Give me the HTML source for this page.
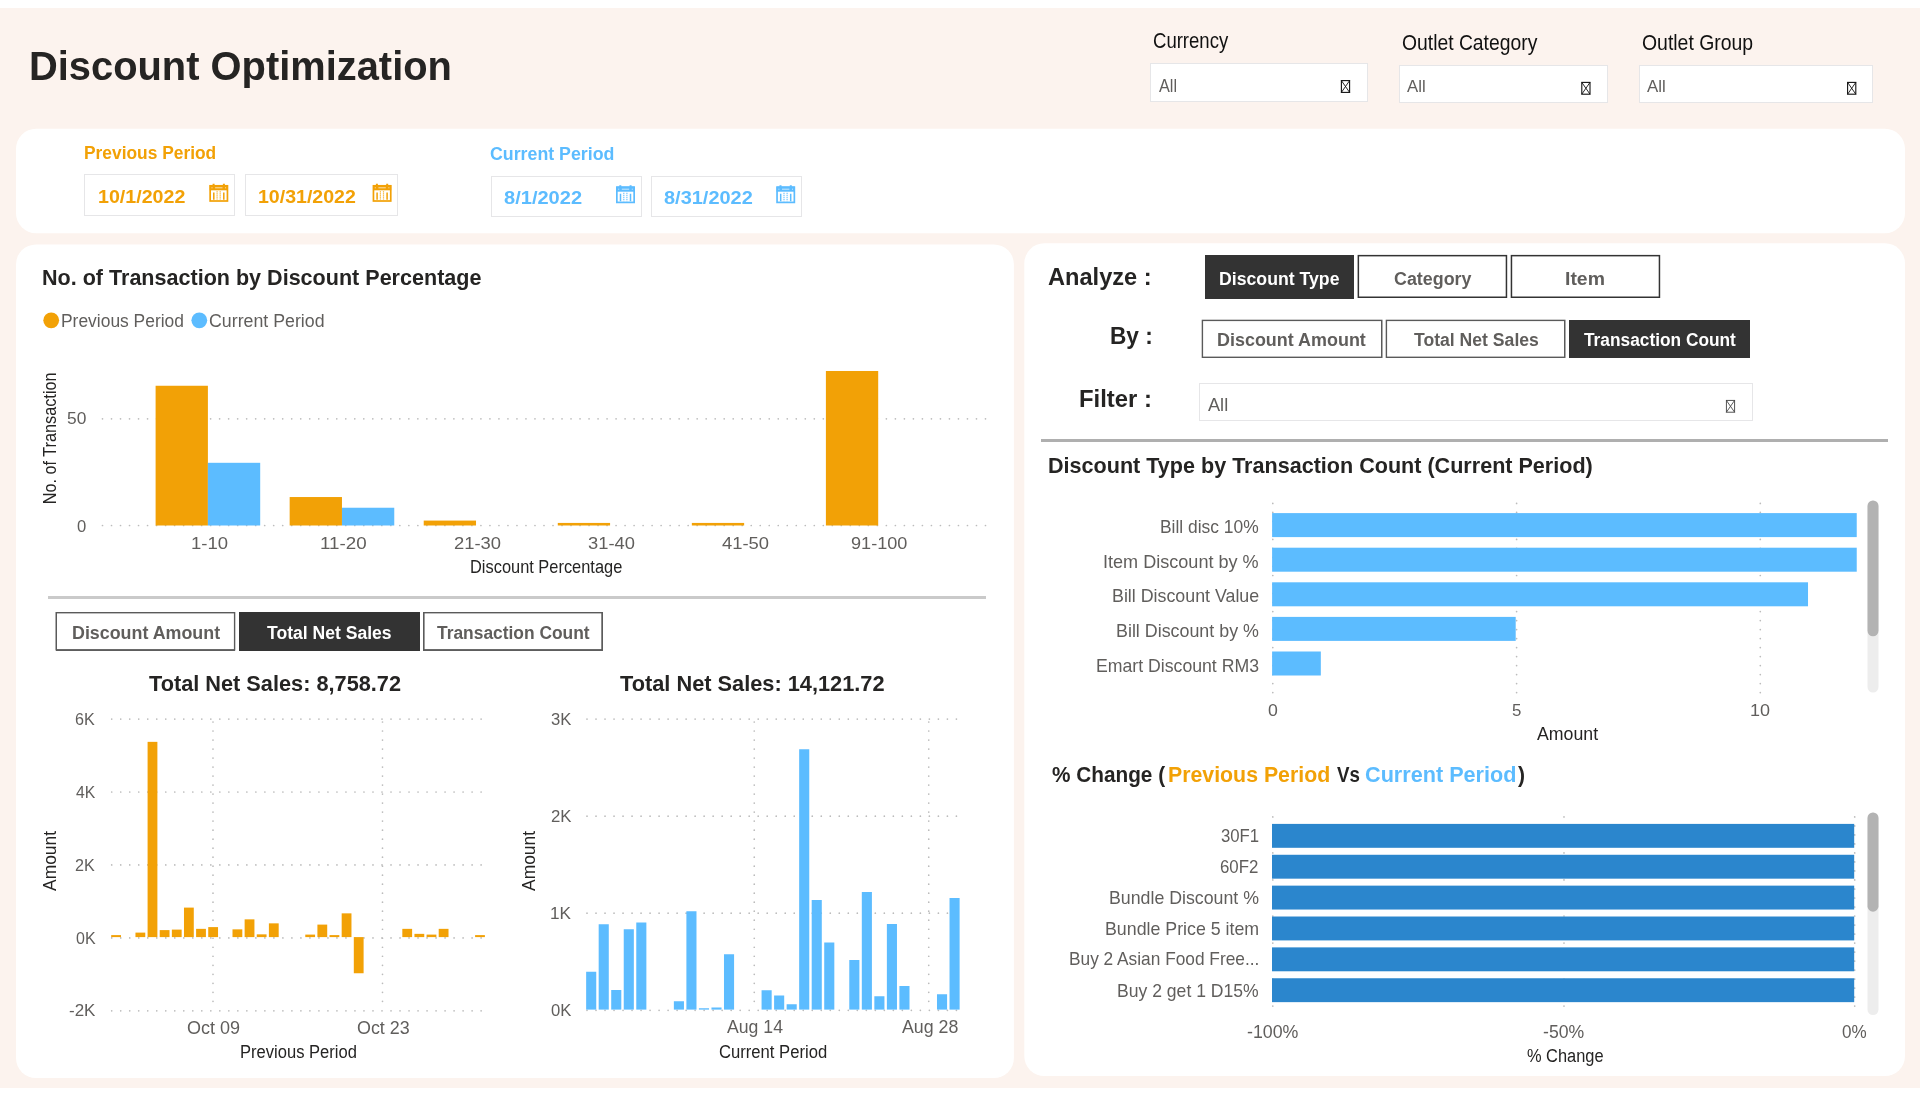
<!DOCTYPE html>
<html lang="en"><head><meta charset="utf-8"><title>Discount Optimization</title>
<style>
html,body{margin:0;padding:0}
body{width:1920px;height:1095px;position:relative;overflow:hidden;background:#fff;font-family:"Liberation Sans",sans-serif}
.bg{position:absolute;left:0;top:8px;width:1920px;height:1080px;background:#fcf3ee}
.panel{position:absolute;background:#fff;border-radius:20px}
.box{position:absolute;background:#fff;border:1px solid #e6e6e8;box-sizing:border-box}
.btn{position:absolute;box-sizing:border-box;border:1px solid #606060;background:#fff}
.btn.on{background:#333333;border-color:#333333}
.btn.k{border:1px solid #3a3a3a}
.hr{position:absolute;height:3px}
.txt{position:absolute;left:0;top:0;width:1920px;height:1095px;will-change:transform}
.t{position:absolute;white-space:nowrap;line-height:1;transform-origin:0 0;margin:0;padding:0}
svg{position:absolute;left:0;top:0}
.g{stroke:#bcbcbc;stroke-width:1.7;stroke-linecap:round;stroke-dasharray:0.01 9;fill:none}
</style></head>
<body>
<div class="bg"></div>
<svg class="panels" width="1920" height="1095" viewBox="0 0 1920 1095" fill="#fff"><rect x="16" y="128.8" width="1889" height="104.4" rx="20"/><rect x="16" y="244.4" width="997.9" height="833.7" rx="20"/><rect x="1024.3" y="243.3" width="880.7" height="832.8" rx="20"/></svg>
<div class="box" style="left:1149.5px;top:63px;width:218.2px;height:39px;"></div>
<div class="box" style="left:1398.7px;top:65px;width:209px;height:38px;"></div>
<div class="box" style="left:1638.7px;top:65px;width:234.3px;height:38px;"></div>
<div class="box" style="left:84px;top:174px;width:150.5px;height:41.5px;"></div>
<div class="box" style="left:244.7px;top:174px;width:153.3px;height:41.5px;"></div>
<div class="box" style="left:491px;top:176px;width:150.5px;height:40.5px;"></div>
<div class="box" style="left:651px;top:176px;width:150.5px;height:40.5px;"></div>
<div class="hr" style="left:48px;top:596px;width:938px;height:3px;background:#cacaca"></div>
<div class="hr" style="left:1041px;top:439px;width:846.5px;height:3px;background:#afafaf"></div>
<div class="btn" style="left:55.5px;top:612px;width:179.8px;height:38.5px;"></div>
<div class="btn on" style="left:238.8px;top:612px;width:181.2px;height:38.5px;"></div>
<div class="btn" style="left:423.2px;top:612px;width:179.5px;height:38.5px;"></div>
<div class="btn on" style="left:1204.5px;top:255px;width:149.5px;height:44px;"></div>
<div class="btn k" style="left:1357.5px;top:255px;width:149.5px;height:43px;"></div>
<div class="btn k" style="left:1510.7px;top:255px;width:149.3px;height:43px;"></div>
<div class="btn" style="left:1201.7px;top:319.7px;width:180.8px;height:38.3px;"></div>
<div class="btn" style="left:1385.7px;top:319.7px;width:179.8px;height:38.3px;"></div>
<div class="btn on" style="left:1569.2px;top:319.7px;width:180.8px;height:38.3px;"></div>
<div class="box" style="left:1198.7px;top:383px;width:554.3px;height:38px;"></div>
<svg width="1920" height="1095" viewBox="0 0 1920 1095">
<line class="g" x1="102.50" y1="418.80" x2="986.00" y2="418.80"/>
<line class="g" x1="102.50" y1="525.50" x2="986.00" y2="525.50"/>
<rect x="155.60" y="385.76" width="52.30" height="139.74" fill="#f2a106"/>
<rect x="207.90" y="462.80" width="52.30" height="62.70" fill="#5cbcff"/>
<rect x="289.66" y="497.04" width="52.30" height="28.46" fill="#f2a106"/>
<rect x="341.96" y="507.74" width="52.30" height="17.76" fill="#5cbcff"/>
<rect x="423.72" y="520.58" width="52.30" height="4.92" fill="#f2a106"/>
<rect x="557.78" y="522.93" width="52.30" height="2.57" fill="#f2a106"/>
<rect x="691.84" y="522.93" width="52.30" height="2.57" fill="#f2a106"/>
<rect x="825.90" y="370.99" width="52.30" height="154.51" fill="#f2a106"/>
<circle cx="51.2" cy="320.3" r="7.9" fill="#f2a106"/><circle cx="199.3" cy="320.3" r="7.9" fill="#5cbcff"/>
<line class="g" x1="111.70" y1="719.10" x2="486.00" y2="719.10"/>
<line class="g" x1="111.70" y1="792.00" x2="486.00" y2="792.00"/>
<line class="g" x1="111.70" y1="864.90" x2="486.00" y2="864.90"/>
<line class="g" x1="111.70" y1="937.90" x2="486.00" y2="937.90"/>
<line class="g" x1="111.70" y1="1010.80" x2="486.00" y2="1010.80"/>
<line class="g" x1="213.00" y1="722.00" x2="213.00" y2="1010.00"/>
<line class="g" x1="382.50" y1="722.00" x2="382.50" y2="1010.00"/>
<rect x="111.20" y="935.10" width="9.80" height="2.00" fill="#f2a106"/>
<rect x="135.46" y="932.60" width="9.80" height="4.50" fill="#f2a106"/>
<rect x="147.59" y="741.85" width="9.80" height="195.25" fill="#f2a106"/>
<rect x="159.72" y="930.10" width="9.80" height="7.00" fill="#f2a106"/>
<rect x="171.85" y="929.60" width="9.80" height="7.50" fill="#f2a106"/>
<rect x="183.98" y="907.60" width="9.80" height="29.50" fill="#f2a106"/>
<rect x="196.11" y="928.85" width="9.80" height="8.25" fill="#f2a106"/>
<rect x="208.24" y="927.10" width="9.80" height="10.00" fill="#f2a106"/>
<rect x="232.50" y="929.35" width="9.80" height="7.75" fill="#f2a106"/>
<rect x="244.63" y="919.35" width="9.80" height="17.75" fill="#f2a106"/>
<rect x="256.76" y="934.35" width="9.80" height="2.75" fill="#f2a106"/>
<rect x="268.89" y="923.35" width="9.80" height="13.75" fill="#f2a106"/>
<rect x="305.28" y="934.60" width="9.80" height="2.50" fill="#f2a106"/>
<rect x="317.41" y="924.60" width="9.80" height="12.50" fill="#f2a106"/>
<rect x="329.54" y="935.10" width="9.80" height="2.00" fill="#f2a106"/>
<rect x="341.67" y="913.35" width="9.80" height="23.75" fill="#f2a106"/>
<rect x="353.80" y="937.10" width="9.80" height="36.15" fill="#f2a106"/>
<rect x="402.32" y="928.85" width="9.80" height="8.25" fill="#f2a106"/>
<rect x="414.45" y="933.85" width="9.80" height="3.25" fill="#f2a106"/>
<rect x="426.58" y="934.60" width="9.80" height="2.50" fill="#f2a106"/>
<rect x="438.71" y="928.85" width="9.80" height="8.25" fill="#f2a106"/>
<rect x="475.10" y="935.10" width="9.80" height="2.00" fill="#f2a106"/>
<line class="g" x1="587.00" y1="719.10" x2="958.00" y2="719.10"/>
<line class="g" x1="587.00" y1="816.20" x2="958.00" y2="816.20"/>
<line class="g" x1="587.00" y1="913.20" x2="958.00" y2="913.20"/>
<line class="g" x1="587.00" y1="1010.30" x2="958.00" y2="1010.30"/>
<line class="g" x1="754.25" y1="722.00" x2="754.25" y2="1010.00"/>
<line class="g" x1="928.75" y1="722.00" x2="928.75" y2="1010.00"/>
<rect x="586.15" y="971.75" width="10.10" height="37.85" fill="#5cbcff"/>
<rect x="598.68" y="924.25" width="10.10" height="85.35" fill="#5cbcff"/>
<rect x="611.21" y="990.00" width="10.10" height="19.60" fill="#5cbcff"/>
<rect x="623.74" y="929.25" width="10.10" height="80.35" fill="#5cbcff"/>
<rect x="636.27" y="922.50" width="10.10" height="87.10" fill="#5cbcff"/>
<rect x="673.86" y="1001.25" width="10.10" height="8.35" fill="#5cbcff"/>
<rect x="686.39" y="911.25" width="10.10" height="98.35" fill="#5cbcff"/>
<rect x="698.92" y="1008.25" width="10.10" height="1.35" fill="#5cbcff"/>
<rect x="711.45" y="1007.50" width="10.10" height="2.10" fill="#5cbcff"/>
<rect x="723.98" y="954.25" width="10.10" height="55.35" fill="#5cbcff"/>
<rect x="761.57" y="990.25" width="10.10" height="19.35" fill="#5cbcff"/>
<rect x="774.10" y="995.50" width="10.10" height="14.10" fill="#5cbcff"/>
<rect x="786.63" y="1004.25" width="10.10" height="5.35" fill="#5cbcff"/>
<rect x="799.16" y="749.25" width="10.10" height="260.35" fill="#5cbcff"/>
<rect x="811.69" y="900.00" width="10.10" height="109.60" fill="#5cbcff"/>
<rect x="824.22" y="942.50" width="10.10" height="67.10" fill="#5cbcff"/>
<rect x="849.28" y="960.00" width="10.10" height="49.60" fill="#5cbcff"/>
<rect x="861.81" y="892.00" width="10.10" height="117.60" fill="#5cbcff"/>
<rect x="874.34" y="996.25" width="10.10" height="13.35" fill="#5cbcff"/>
<rect x="886.87" y="924.00" width="10.10" height="85.60" fill="#5cbcff"/>
<rect x="899.40" y="986.00" width="10.10" height="23.60" fill="#5cbcff"/>
<rect x="936.99" y="994.25" width="10.10" height="15.35" fill="#5cbcff"/>
<rect x="949.52" y="898.00" width="10.10" height="111.60" fill="#5cbcff"/>
<line class="g" x1="1272.80" y1="503.40" x2="1272.80" y2="693.00"/>
<line class="g" x1="1516.60" y1="503.40" x2="1516.60" y2="693.00"/>
<line class="g" x1="1760.30" y1="503.40" x2="1760.30" y2="693.00"/>
<rect x="1272.10" y="513.10" width="584.64" height="24.00" fill="#5cbcff"/>
<rect x="1272.10" y="547.70" width="584.64" height="24.00" fill="#5cbcff"/>
<rect x="1272.10" y="582.30" width="535.92" height="24.00" fill="#5cbcff"/>
<rect x="1272.10" y="616.90" width="243.60" height="24.00" fill="#5cbcff"/>
<rect x="1272.10" y="651.50" width="48.72" height="24.00" fill="#5cbcff"/>
<line class="g" x1="1272.80" y1="816.90" x2="1272.80" y2="1015.00"/>
<line class="g" x1="1564.00" y1="816.90" x2="1564.00" y2="1015.00"/>
<line class="g" x1="1854.70" y1="816.90" x2="1854.70" y2="1015.00"/>
<rect x="1272.00" y="823.90" width="582.20" height="23.90" fill="#2b86cd"/>
<rect x="1272.00" y="854.77" width="582.20" height="23.90" fill="#2b86cd"/>
<rect x="1272.00" y="885.64" width="582.20" height="23.90" fill="#2b86cd"/>
<rect x="1272.00" y="916.51" width="582.20" height="23.90" fill="#2b86cd"/>
<rect x="1272.00" y="947.38" width="582.20" height="23.90" fill="#2b86cd"/>
<rect x="1272.00" y="978.25" width="582.20" height="23.90" fill="#2b86cd"/>
<rect x="1867.5" y="500.5" width="11.0" height="192.0" rx="5.5" fill="#ededed"/>
<rect x="1867.5" y="500.5" width="11.0" height="135.75" rx="5.5" fill="#b3b3b3"/>
<rect x="1867.5" y="812.5" width="11.0" height="202.5" rx="5.5" fill="#ededed"/>
<rect x="1867.5" y="812.5" width="11.0" height="99.20000000000005" rx="5.5" fill="#b3b3b3"/>
<rect x="56.20" y="612.70" width="178.40" height="37.10" fill="none" stroke="#5a5a5a" stroke-width="1.4"/>
<rect x="423.90" y="612.70" width="178.10" height="37.10" fill="none" stroke="#5a5a5a" stroke-width="1.4"/>
<rect x="1202.40" y="320.40" width="179.40" height="36.90" fill="none" stroke="#5a5a5a" stroke-width="1.4"/>
<rect x="1386.40" y="320.40" width="178.40" height="36.90" fill="none" stroke="#5a5a5a" stroke-width="1.4"/>
<rect x="1358.35" y="255.65" width="148.10" height="41.60" fill="none" stroke="#333" stroke-width="1.5"/>
<rect x="1511.45" y="255.65" width="148.00" height="41.60" fill="none" stroke="#333" stroke-width="1.5"/>
<g transform="translate(209.3,183.8)" fill="none" stroke="#f2a106"><rect x="0.85" y="2" width="17.3" height="15.2" stroke-width="1.7"/><rect x="0.4" y="1.3" width="18.2" height="5.2" fill="#f2a106" stroke="none"/><path d="M4.3 0V3M14.6 0V3" stroke-width="2"/><path d="M4.5 8.6V16M14.5 8.6V16" stroke-width="1.5"/><path d="M7.8 7.5V16M10.9 7.5V16" stroke-width="1.2" stroke-dasharray="1.3 0.7" opacity="0.85"/><path d="M2.2 4H3.2M5.8 4H13.2M15.8 4H16.8" stroke="#fff" stroke-width="0.8" opacity="0.85"/></g>
<g transform="translate(372.6,183.8)" fill="none" stroke="#f2a106"><rect x="0.85" y="2" width="17.3" height="15.2" stroke-width="1.7"/><rect x="0.4" y="1.3" width="18.2" height="5.2" fill="#f2a106" stroke="none"/><path d="M4.3 0V3M14.6 0V3" stroke-width="2"/><path d="M4.5 8.6V16M14.5 8.6V16" stroke-width="1.5"/><path d="M7.8 7.5V16M10.9 7.5V16" stroke-width="1.2" stroke-dasharray="1.3 0.7" opacity="0.85"/><path d="M2.2 4H3.2M5.8 4H13.2M15.8 4H16.8" stroke="#fff" stroke-width="0.8" opacity="0.85"/></g>
<g transform="translate(616,185.2)" fill="none" stroke="#5cbcff"><rect x="0.85" y="2" width="17.3" height="15.2" stroke-width="1.7"/><rect x="0.4" y="1.3" width="18.2" height="5.2" fill="#5cbcff" stroke="none"/><path d="M4.3 0V3M14.6 0V3" stroke-width="2"/><path d="M4.5 8.6V16M14.5 8.6V16" stroke-width="1.5"/><path d="M7.8 7.5V16M10.9 7.5V16" stroke-width="1.2" stroke-dasharray="1.3 0.7" opacity="0.85"/><path d="M2.2 4H3.2M5.8 4H13.2M15.8 4H16.8" stroke="#fff" stroke-width="0.8" opacity="0.85"/></g>
<g transform="translate(776.2,185.2)" fill="none" stroke="#5cbcff"><rect x="0.85" y="2" width="17.3" height="15.2" stroke-width="1.7"/><rect x="0.4" y="1.3" width="18.2" height="5.2" fill="#5cbcff" stroke="none"/><path d="M4.3 0V3M14.6 0V3" stroke-width="2"/><path d="M4.5 8.6V16M14.5 8.6V16" stroke-width="1.5"/><path d="M7.8 7.5V16M10.9 7.5V16" stroke-width="1.2" stroke-dasharray="1.3 0.7" opacity="0.85"/><path d="M2.2 4H3.2M5.8 4H13.2M15.8 4H16.8" stroke="#fff" stroke-width="0.8" opacity="0.85"/></g>
<g transform="translate(1340.8,80)" fill="none" stroke="#111" stroke-width="1.1"><rect x="0.6" y="0.6" width="8.2" height="11.8"/><path d="M0.6 0.6L8.8 12.4M8.8 0.6L0.6 12.4" stroke-width="0.9"/></g>
<g transform="translate(1581.2,81.8)" fill="none" stroke="#111" stroke-width="1.1"><rect x="0.6" y="0.6" width="8.2" height="11.8"/><path d="M0.6 0.6L8.8 12.4M8.8 0.6L0.6 12.4" stroke-width="0.9"/></g>
<g transform="translate(1847,81.8)" fill="none" stroke="#111" stroke-width="1.1"><rect x="0.6" y="0.6" width="8.2" height="11.8"/><path d="M0.6 0.6L8.8 12.4M8.8 0.6L0.6 12.4" stroke-width="0.9"/></g>
<g transform="translate(1725.8,399.8)" fill="none" stroke="#4a4a4a" stroke-width="0.95"><rect x="0.6" y="0.6" width="8.2" height="11.8"/><path d="M0.6 0.6L8.8 12.4M8.8 0.6L0.6 12.4" stroke-width="0.9"/></g>
</svg>
<div class="txt">
<div class="t " style="left:29.16px;top:45.59px;font-size:41.13px;color:#252423;transform:scaleX(0.9691);font-weight:700">Discount Optimization</div>
<div class="t " style="left:1152.82px;top:29.94px;font-size:21.22px;color:#111;transform:scaleX(0.8736)">Currency</div>
<div class="t " style="left:1402.13px;top:31.70px;font-size:21.22px;color:#111;transform:scaleX(0.9106)">Outlet Category</div>
<div class="t " style="left:1642.13px;top:31.70px;font-size:21.22px;color:#111;transform:scaleX(0.9149)">Outlet Group</div>
<div class="t " style="left:1159.00px;top:77.86px;font-size:17.44px;color:#605e5c;transform:scaleX(0.9327)">All</div>
<div class="t " style="left:1407.20px;top:78.15px;font-size:17.15px;color:#605e5c;transform:scaleX(0.9764)">All</div>
<div class="t " style="left:1647.20px;top:78.15px;font-size:17.15px;color:#605e5c;transform:scaleX(0.9820)">All</div>
<div class="t " style="left:83.87px;top:143.75px;font-size:18.90px;color:#f2a106;transform:scaleX(0.9192);font-weight:700">Previous Period</div>
<div class="t " style="left:489.79px;top:144.51px;font-size:18.90px;color:#5cbcff;transform:scaleX(0.9403);font-weight:700">Current Period</div>
<div class="t " style="left:97.82px;top:188.75px;font-size:17.88px;color:#f2a106;transform:scaleX(1.0994);font-weight:700">10/1/2022</div>
<div class="t " style="left:257.83px;top:188.75px;font-size:17.88px;color:#f2a106;transform:scaleX(1.0948);font-weight:700">10/31/2022</div>
<div class="t " style="left:503.90px;top:189.89px;font-size:17.88px;color:#5cbcff;transform:scaleX(1.1231);font-weight:700">8/1/2022</div>
<div class="t " style="left:663.90px;top:189.89px;font-size:17.88px;color:#5cbcff;transform:scaleX(1.1174);font-weight:700">8/31/2022</div>
<div class="t " style="left:42.10px;top:267.11px;font-size:22.09px;color:#252423;transform:scaleX(0.9760);font-weight:700">No. of Transaction by Discount Percentage</div>
<div class="t " style="left:60.91px;top:311.91px;font-size:18.90px;color:#605e5c;transform:scaleX(0.9222)">Previous Period</div>
<div class="t " style="left:208.61px;top:311.71px;font-size:18.90px;color:#605e5c;transform:scaleX(0.9408)">Current Period</div>
<div class="t" style="left:57.00px;top:502.50px;font-size:17.50px;color:#252423;transform:rotate(-90deg) translate(-1.30px,-14.81px) scaleX(0.9285)">No. of Transaction</div>
<div class="t " style="left:67.30px;top:410.20px;font-size:17.15px;color:#605e5c;transform:scaleX(1.0140)">50</div>
<div class="t " style="left:77.33px;top:517.62px;font-size:17.15px;color:#605e5c;transform:scaleX(0.9718)">0</div>
<div class="t " style="left:190.61px;top:534.64px;font-size:17.15px;color:#605e5c;transform:scaleX(1.0797)">1-10</div>
<div class="t " style="left:319.84px;top:534.64px;font-size:17.15px;color:#605e5c;transform:scaleX(1.0948)">11-20</div>
<div class="t " style="left:453.83px;top:534.64px;font-size:17.15px;color:#605e5c;transform:scaleX(1.0740)">21-30</div>
<div class="t " style="left:588.02px;top:534.64px;font-size:17.15px;color:#605e5c;transform:scaleX(1.0697)">31-40</div>
<div class="t " style="left:722.13px;top:534.64px;font-size:17.15px;color:#605e5c;transform:scaleX(1.0728)">41-50</div>
<div class="t " style="left:851.18px;top:534.64px;font-size:17.15px;color:#605e5c;transform:scaleX(1.0566)">91-100</div>
<div class="t " style="left:469.69px;top:559.37px;font-size:17.88px;color:#252423;transform:scaleX(0.9183)">Discount Percentage</div>
<div class="t " style="left:72.24px;top:623.75px;font-size:18.90px;color:#605e5c;transform:scaleX(0.9451);font-weight:700">Discount Amount</div>
<div class="t " style="left:266.82px;top:623.75px;font-size:18.90px;color:#fff;transform:scaleX(0.9296);font-weight:700">Total Net Sales</div>
<div class="t " style="left:436.53px;top:623.75px;font-size:18.90px;color:#605e5c;transform:scaleX(0.9206);font-weight:700">Transaction Count</div>
<div class="t " style="left:149.08px;top:672.89px;font-size:22.53px;color:#252423;transform:scaleX(0.9650);font-weight:700">Total Net Sales: 8,758.72</div>
<div class="t " style="left:620.48px;top:673.22px;font-size:22.53px;color:#252423;transform:scaleX(0.9666);font-weight:700">Total Net Sales: 14,121.72</div>
<div class="t " style="left:75.44px;top:711.31px;font-size:17.15px;color:#605e5c;transform:scaleX(0.9424)">6K</div>
<div class="t " style="left:75.93px;top:784.31px;font-size:17.15px;color:#605e5c;transform:scaleX(0.9187)">4K</div>
<div class="t " style="left:75.44px;top:857.28px;font-size:17.15px;color:#605e5c;transform:scaleX(0.9424)">2K</div>
<div class="t " style="left:75.61px;top:929.66px;font-size:17.15px;color:#605e5c;transform:scaleX(0.9344)">0K</div>
<div class="t " style="left:68.73px;top:1001.88px;font-size:17.15px;color:#605e5c;transform:scaleX(0.9912)">-2K</div>
<div class="t " style="left:187.19px;top:1019.70px;font-size:17.88px;color:#605e5c;transform:scaleX(1.0090)">Oct 09</div>
<div class="t " style="left:356.69px;top:1019.70px;font-size:17.88px;color:#605e5c;transform:scaleX(1.0023)">Oct 23</div>
<div class="t " style="left:240.43px;top:1043.50px;font-size:17.44px;color:#252423;transform:scaleX(0.9493)">Previous Period</div>
<div class="t" style="left:57.00px;top:891.00px;font-size:17.50px;color:#252423;transform:rotate(-90deg) translate(-0.00px,-14.81px) scaleX(0.9967)">Amount</div>
<div class="t " style="left:551.08px;top:711.31px;font-size:17.15px;color:#605e5c;transform:scaleX(0.9718)">3K</div>
<div class="t " style="left:550.91px;top:808.33px;font-size:17.15px;color:#605e5c;transform:scaleX(0.9801)">2K</div>
<div class="t " style="left:550.46px;top:905.41px;font-size:17.15px;color:#605e5c;transform:scaleX(1.0017)">1K</div>
<div class="t " style="left:551.08px;top:1001.88px;font-size:17.15px;color:#605e5c;transform:scaleX(0.9718)">0K</div>
<div class="t " style="left:727.00px;top:1019.26px;font-size:17.88px;color:#605e5c;transform:scaleX(0.9887)">Aug 14</div>
<div class="t " style="left:901.75px;top:1019.08px;font-size:17.88px;color:#605e5c;transform:scaleX(0.9963)">Aug 28</div>
<div class="t " style="left:719.17px;top:1043.50px;font-size:17.44px;color:#252423;transform:scaleX(0.9541)">Current Period</div>
<div class="t" style="left:535.50px;top:891.00px;font-size:17.50px;color:#252423;transform:rotate(-90deg) translate(-0.00px,-14.81px) scaleX(0.9967)">Amount</div>
<div class="t " style="left:1048.11px;top:264.83px;font-size:24.35px;color:#252423;transform:scaleX(0.9698);font-weight:700">Analyze :</div>
<div class="t " style="left:1110.43px;top:323.91px;font-size:24.35px;color:#252423;transform:scaleX(0.9310);font-weight:700">By :</div>
<div class="t " style="left:1078.55px;top:387.09px;font-size:24.35px;color:#252423;transform:scaleX(0.9790);font-weight:700">Filter :</div>
<div class="t " style="left:1218.85px;top:270.14px;font-size:18.90px;color:#fff;transform:scaleX(0.9359);font-weight:700">Discount Type</div>
<div class="t " style="left:1393.78px;top:270.38px;font-size:18.90px;color:#605e5c;transform:scaleX(0.9462);font-weight:700">Category</div>
<div class="t " style="left:1565.49px;top:269.90px;font-size:18.90px;color:#605e5c;transform:scaleX(1.0283);font-weight:700">Item</div>
<div class="t " style="left:1217.08px;top:330.75px;font-size:18.90px;color:#605e5c;transform:scaleX(0.9497);font-weight:700">Discount Amount</div>
<div class="t " style="left:1413.82px;top:330.75px;font-size:18.90px;color:#605e5c;transform:scaleX(0.9315);font-weight:700">Total Net Sales</div>
<div class="t " style="left:1584.08px;top:330.75px;font-size:18.90px;color:#fff;transform:scaleX(0.9158);font-weight:700">Transaction Count</div>
<div class="t " style="left:1208.00px;top:395.62px;font-size:18.17px;color:#605e5c;transform:scaleX(1.0007)">All</div>
<div class="t " style="left:1048.10px;top:455.16px;font-size:21.80px;color:#252423;transform:scaleX(0.9894);font-weight:700">Discount Type by Transaction Count (Current Period)</div>
<div class="t " style="left:1159.86px;top:517.87px;font-size:18.17px;color:#605e5c;transform:scaleX(0.9586)">Bill disc 10%</div>
<div class="t " style="left:1102.87px;top:552.83px;font-size:18.17px;color:#605e5c;transform:scaleX(0.9951)">Item Discount by %</div>
<div class="t " style="left:1111.57px;top:587.12px;font-size:18.17px;color:#605e5c;transform:scaleX(0.9810)">Bill Discount Value</div>
<div class="t " style="left:1115.57px;top:621.67px;font-size:18.17px;color:#605e5c;transform:scaleX(0.9836)">Bill Discount by %</div>
<div class="t " style="left:1095.59px;top:657.12px;font-size:18.17px;color:#605e5c;transform:scaleX(0.9732)">Emart Discount RM3</div>
<div class="t " style="left:1267.54px;top:701.62px;font-size:17.15px;color:#605e5c;transform:scaleX(1.0325)">0</div>
<div class="t " style="left:1511.83px;top:702.01px;font-size:17.15px;color:#605e5c;transform:scaleX(0.9820)">5</div>
<div class="t " style="left:1749.90px;top:701.62px;font-size:17.15px;color:#605e5c;transform:scaleX(1.0495)">10</div>
<div class="t " style="left:1537.00px;top:726.29px;font-size:17.88px;color:#252423;transform:scaleX(0.9919)">Amount</div>
<div class="t " style="left:1051.98px;top:764.15px;font-size:22.38px;color:#252423;transform:scaleX(0.9282);font-weight:700">% Change (</div>
<div class="t " style="left:1167.86px;top:764.15px;font-size:22.38px;color:#f2a106;transform:scaleX(0.9520);font-weight:700">Previous Period</div>
<div class="t " style="left:1336.66px;top:764.15px;font-size:22.38px;color:#252423;transform:scaleX(0.8365);font-weight:700">Vs</div>
<div class="t " style="left:1364.88px;top:764.15px;font-size:22.38px;color:#5cbcff;transform:scaleX(0.9670);font-weight:700">Current Period</div>
<div class="t " style="left:1517.50px;top:764.15px;font-size:22.38px;color:#252423;transform:scaleX(0.9405);font-weight:700">)</div>
<div class="t " style="left:1220.58px;top:826.62px;font-size:18.17px;color:#605e5c;transform:scaleX(0.9215)">30F1</div>
<div class="t " style="left:1220.41px;top:857.52px;font-size:18.17px;color:#605e5c;transform:scaleX(0.9279)">60F2</div>
<div class="t " style="left:1108.58px;top:889.22px;font-size:18.17px;color:#605e5c;transform:scaleX(0.9773)">Bundle Discount %</div>
<div class="t " style="left:1104.83px;top:920.02px;font-size:18.17px;color:#605e5c;transform:scaleX(0.9792)">Bundle Price 5 item</div>
<div class="t " style="left:1069.12px;top:950.00px;font-size:18.17px;color:#605e5c;transform:scaleX(0.9525)">Buy 2 Asian Food Free...</div>
<div class="t " style="left:1116.84px;top:981.52px;font-size:18.17px;color:#605e5c;transform:scaleX(0.9681)">Buy 2 get 1 D15%</div>
<div class="t " style="left:1247.20px;top:1024.08px;font-size:17.44px;color:#605e5c;transform:scaleX(1.0202)">-100%</div>
<div class="t " style="left:1543.21px;top:1024.08px;font-size:17.44px;color:#605e5c;transform:scaleX(1.0119)">-50%</div>
<div class="t " style="left:1841.92px;top:1024.08px;font-size:17.44px;color:#605e5c;transform:scaleX(0.9793)">0%</div>
<div class="t " style="left:1527.13px;top:1047.87px;font-size:17.88px;color:#252423;transform:scaleX(0.9176)">% Change</div>
</div>
</body></html>
